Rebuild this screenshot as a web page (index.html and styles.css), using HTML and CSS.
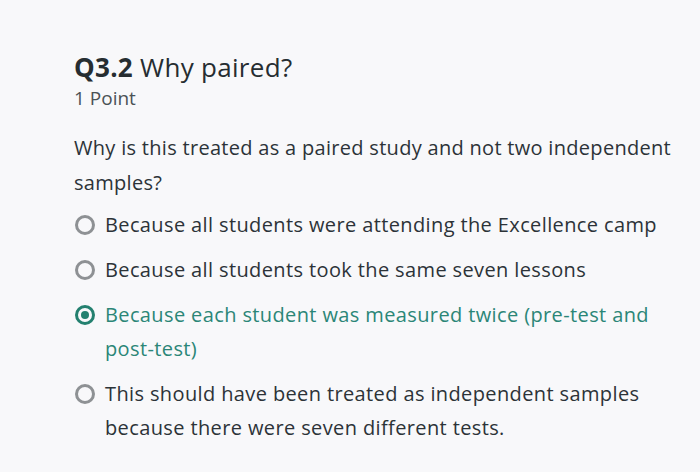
FILE: index.html
```html
<!DOCTYPE html>
<html lang="en">
<head>
<meta charset="utf-8">
<title>Q3.2 Why paired?</title>
<link rel="stylesheet" href="styles.css">
</head>
<body>
<main class="question">
  <header class="q-head">
    <h1 class="q-title"><span class="q-num">Q3.2</span> Why paired?</h1>
    <div class="q-points">1 Point</div>
  </header>
  <p class="q-prompt">Why is this treated as a paired study and not two independent samples?</p>
  <ul class="options">
    <li class="option"><span class="radio"></span><span class="opt-text">Because all students were attending the Excellence camp</span></li>
    <li class="option"><span class="radio"></span><span class="opt-text">Because all students took the same seven lessons</span></li>
    <li class="option selected"><span class="radio"></span><span class="opt-text">Because each student was measured twice (pre-test and post-test)</span></li>
    <li class="option"><span class="radio"></span><span class="opt-text">This should have been treated as independent samples because there were seven different tests.</span></li>
  </ul>
</main>
</body>
</html>
```

FILE: styles.css
```css
html, body {
  margin: 0;
  padding: 0;
  background: #f8f8fa;
}
body {
  font-family: "Open Sans", "Noto Sans", sans-serif;
  color: #2c3338;
}
.question {
  padding: 51px 20px 0 74px;
  display: flex;
  flex-direction: column;
}
.q-head {
  display: flex;
  flex-direction: column;
  gap: 2px;
}
.q-title {
  margin: 0;
  font-size: 26px;
  line-height: 32px;
  font-weight: 400;
  letter-spacing: 0.3px;
  color: #262d31;
}
.q-num {
  font-weight: 700;
}
.q-points {
  font-size: 19px;
  line-height: 26px;
  color: #4b5256;
}
.q-prompt {
  margin: 19px 0 0;
  font-size: 20px;
  line-height: 35px;
  letter-spacing: 0.3px;
  width: 610px;
}
.options {
  list-style: none;
  margin: 8px 0 0;
  padding: 0;
  display: flex;
  flex-direction: column;
  gap: 11px;
}
.option {
  display: flex;
  align-items: flex-start;
  gap: 10px;
  font-size: 20px;
  line-height: 34px;
  letter-spacing: 0.38px;
  padding-left: 1px;
}
.radio {
  flex: none;
  box-sizing: border-box;
  width: 20px;
  height: 20px;
  margin-top: 7px;
  border: 3px solid #8e9194;
  border-radius: 50%;
  display: flex;
  align-items: center;
  justify-content: center;
}
.opt-text {
  width: 570px;
}
.selected .radio {
  border-color: #23806f;
}
.selected .radio::after {
  content: "";
  width: 8px;
  height: 8px;
  border-radius: 50%;
  background: #23806f;
}
.selected .opt-text {
  color: #2b8677;
}
```
